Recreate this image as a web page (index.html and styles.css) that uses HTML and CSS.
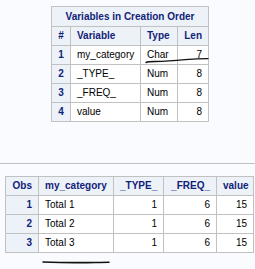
FILE: index.html
```html
<!DOCTYPE html>
<html>
<head>
<meta charset="utf-8">
<link rel="stylesheet" href="styles.css">
</head>
<body>
<div class="page">
  <section class="top">
    <table class="sas t1">
      <colgroup><col class="c1a"><col class="c1b"><col class="c1c"><col class="c1d"></colgroup>
      <thead>
        <tr><th colspan="4" class="title">Variables in Creation Order</th></tr>
        <tr><th class="c">#</th><th class="l">Variable</th><th class="l">Type</th><th class="r">Len</th></tr>
      </thead>
      <tbody>
        <tr><th class="c">1</th><td>my_category</td><td>Char</td><td class="r">7</td></tr>
        <tr><th class="c">2</th><td>_TYPE_</td><td>Num</td><td class="r">8</td></tr>
        <tr><th class="c">3</th><td>_FREQ_</td><td>Num</td><td class="r">8</td></tr>
        <tr><th class="c">4</th><td>value</td><td>Num</td><td class="r">8</td></tr>
      </tbody>
    </table>
    <svg class="mark mark1" width="64" height="8" viewBox="0 0 64 8"><path d="M1 5.5 C3 4.5 5 4.5 10 4.5 C22 4.3 30 3.6 40 2.6 C50 1.8 56 1.6 63 1.6" fill="none" stroke="#111" stroke-width="1.4" stroke-linecap="round"/></svg>
  </section>
  <hr class="sep">
  <section class="bottom">
    <table class="sas t2">
      <colgroup><col class="c2a"><col class="c2b"><col class="c2c"><col class="c2d"><col class="c2e"></colgroup>
      <thead>
        <tr><th class="r">Obs</th><th class="l">my_category</th><th class="r">_TYPE_</th><th class="r">_FREQ_</th><th class="r">value</th></tr>
      </thead>
      <tbody>
        <tr><th class="r">1</th><td>Total 1</td><td class="r">1</td><td class="r">6</td><td class="r">15</td></tr>
        <tr><th class="r">2</th><td>Total 2</td><td class="r">1</td><td class="r">6</td><td class="r">15</td></tr>
        <tr><th class="r">3</th><td>Total 3</td><td class="r">1</td><td class="r">6</td><td class="r">15</td></tr>
      </tbody>
    </table>
    <svg class="mark mark2" width="68" height="5" viewBox="0 0 68 5"><path d="M1 2 C15 2.3 30 2.8 45 2.6 C55 2.4 62 2.2 67 2.2" fill="none" stroke="#111" stroke-width="1.6" stroke-linecap="round"/></svg>
  </section>
</div>
</body>
</html>
```
FILE: styles.css
```css
html, body {
  margin: 0;
  padding: 0;
  background: #fafbfe;
}
.page {
  width: 255px;
  height: 269px;
  overflow: hidden;
  font-family: "Liberation Sans", Arial, sans-serif;
  font-size: 10px;
}
.top {
  position: relative;
  padding-top: 6px;
  padding-left: 51px;
  height: 163px;
  box-sizing: border-box;
}
.sas {
  border-collapse: collapse;
  table-layout: fixed;
  background: #fff;
}
.sas th, .sas td {
  border: 1px solid #c1c1c1;
  padding: 2px 6px;
  line-height: 14px;
  height: 14px;
  white-space: nowrap;
  overflow: hidden;
}
.sas th {
  background: #edf2f9;
  color: #112277;
  font-weight: bold;
}
.sas td {
  color: #000;
  text-align: left;
}
.sas th.title {
  height: 15px;
  text-align: center;
}
.l { text-align: left; }
.r { text-align: right !important; }
.c { text-align: center; }
.t1 { width: 158px; }
.c1a { width: 19px; }
.c1b { width: 70px; }
.c1c { width: 37px; }
.c1d { width: 31px; }
.sep {
  margin: 0;
  border: 0;
  border-top: 1px solid #c1c1c1;
  height: 0;
}
.bottom {
  position: relative;
  padding-top: 12px;
  padding-left: 5px;
}
.t2 { width: 249px; }
.c2a { width: 33px; }
.c2b { width: 75px; }
.c2c { width: 50px; }
.c2d { width: 53px; }
.c2e { width: 37px; }
.mark {
  position: absolute;
  display: block;
}
.mark1 { left: 145px; top: 57px; }
.mark2 { left: 42px; top: 96px; }
```
